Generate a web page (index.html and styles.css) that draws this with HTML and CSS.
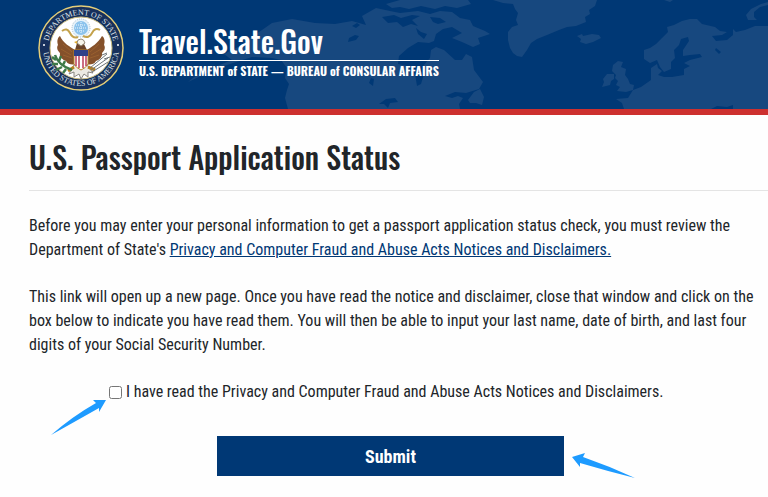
FILE: index.html
```
<!DOCTYPE html>
<html lang="en">
<head>
    <meta charset="UTF-8">
    <meta name="viewport" content="width=device-width, initial-scale=1.0">
    <title>U.S. Passport Application Status</title>
    <link rel="stylesheet" href="styles.css">
</head>
<body>
    <header class="site-header">
        <svg class="map" viewBox="0 0 768 109" preserveAspectRatio="xMidYMin slice" aria-hidden="true">
            <g class="land">
                <!-- north america -->
                <path d="M188 82L198 74 212 68 232 60 224 54 240 46 250 38 262 30 272 23 292 19 315 23 335 24 352 21 366 25 362 16 376 8 390 11 400 13 418 11 430 14 440 11 452 12 460 18 470 20 473 26 485 31 490 34 478 38 480 44 473 47 462 42 452 38 462 33 452 27 443 29 436 34 434 41 429 43 418 42 408 48 399 56 398 64 407 66 415 74 417 86 421 84 424 74 423 66 430 58 431 50 436 47 444 50 455 60 462 60 466 54 472 57 474 70 483 82 479 89 466 93 455 92 445 96 452 98 458 96 463 98 459 104 460 109 288 109 285 98 287 90 289 84 285 78 287 68 281 60 272 58 252 57 236 62 218 68 205 74z"/>
                <path d="M386 4L400 0 468 0 471 4 457 8 445 6 435 9 421 6 409 9 400 7 392 8z"/>
                <path d="M468 100L474 92 480 89 484 97 482 105 476 103 470 103z"/>
                <!-- greenland and iceland -->
                <path d="M493 0H597L595 6 589 10 590 14 585 17 586 22 576 26 567 27 559 30 547 35 537 39 531 43 527 50 522 57 517 56 513 53 510 48 508 40 508 32 512 27 518 25 516 20 518 13 515 9 513 4 503 3z"/>
                <path d="M577 36l5-2 1 2 9-2 7 1 2 3-8 4-7 2-6-2 1-3z"/>
                <!-- british isles -->
                <path d="M613 65l5-4 5 1-2 5 5 2-1 6 3 4 2 5 4 1-1 5-7 2-9-1 3-4-4-2 2-4-3-3 1-3-4-4z"/>
                <path d="M603 79l4-5 7 0 0 5-3 2-1 4-8 2 2-5z"/>
                <!-- europe -->
                <path d="M644 50L650 48 656 44 662 38 668 32 667 27 674 25 682 21 690 19 697 19 702 24 715 27 720 31 727 32 722 35 712 36 716 41 727 40 733 35 733 29 736 32 745 30 755 26 768 26V109H624L622 103 616 99 628 98 633 90 641 87 651 80 651 68 657 64 658 68 662 71 658 75 664 77 672 77 684 75 684 69 690 66 684 63 690 60 702 57 700 54 690 55 683 56 683 50 689 41 688 37 681 39 679 45 674 50 675 58 671 62 671 69 664 72 660 67 657 60 650 63 644 59z"/>
                <path d="M748 20l-2-5 5-6 10-5 7-2 0 3-8 2-6 5 0 5 3 3z"/>
                <path d="M664 0l6 2 3-2z"/>
            </g>
            <g class="water">
                <path d="M352 26l5-3 3 2-4 3zM349 38l6-3 4 1-3 4-8 2zM379 104l7-5 9-1 3 4-8 1-2 5-4-4zM371 78l3 1-1 7-4-3z"/>
                <path d="M382 17l12-2 7 3 11-3 8 1-8 4 6 6-7-2-8 3-6-5-9 1zM416 28l5 4 6 2-3 5-6-5zM430 17l10 1 6 4-8 2-5-2zM716 48l5 4-2 2-4-4zM711 109l6-3 10 1 6-2 0 4z"/>
            </g>
        </svg>

        <div class="brand">
            <svg class="seal" viewBox="0 0 86 86" role="img" aria-label="Department of State seal">
                <defs>
                    <path id="arcTop" d="M10 43a33 33 0 0 1 66 0"/>
                    <path id="arcBottom" d="M5 43a38 38 0 0 0 76 0"/>
                </defs>
                <circle cx="43" cy="43" r="42" fill="#17305c" stroke="#e4ce79" stroke-width="1.5"/>
                <circle cx="43" cy="43" r="31" fill="#fff" stroke="#c9ba7d"/>
                <text class="seal-text"><textPath href="#arcTop" startOffset="50%" text-anchor="middle">DEPARTMENT OF STATE</textPath></text>
                <text class="seal-text"><textPath href="#arcBottom" startOffset="50%" text-anchor="middle">UNITED STATES OF AMERICA</textPath></text>
                <!-- glory -->
                <circle cx="43" cy="23" r="9" fill="#e8f3fa" stroke="#a6bfd0" stroke-dasharray="1 1"/>
                <circle cx="43" cy="23" r="7" fill="#8cc3ec"/>
                <path d="M38 20h10M37 23h12M39 26h8M43 17v12" stroke="#eef8ff" stroke-dasharray="1 1"/>
                <!-- ribbon -->
                <path d="M24 26q5-4 8 2 3 6 8 4M62 25q-5-3-8 3-3 6-9 3" fill="none" stroke="#c4a24c" stroke-width="2"/>
                <!-- wings, body, tail -->
                <path d="M39 46C32 42 25 38 22 31c-3 2-3 6-2 9-2 3 0 6 2 8-1 4 3 7 6 8 2 4 7 4 11 3z" fill="#85512b"/>
                <path d="M47 46c7-4 13-8 17-15 3 2 3 6 2 9 2 3 0 6-2 8 1 4-3 7-6 8-2 4-7 4-11 3z" fill="#85512b"/>
                <path d="M25 39l9 8M23 44l10 6M25 50l9 3M61 39l-9 8M63 44l-10 6M61 50l-9 3" stroke="#99602f"/>
                <path d="M37 45l2-7 6-1 4 8z" fill="#694329"/>
                <path d="M39 38q0-4 4-4 3 0 4 4l-4 3z" fill="#f7f5eb" stroke="#938875"/>
                <path d="M39 36l-3 1 3 2" fill="#dba72c"/>
                <path d="M36 60l-5 9 5-2 0 5 5-3 2 5 3-5 4 3 0-5 5 1-6-8z" fill="#eceae4" stroke="#888580"/>
                <path d="M36 62l-6 4M50 62l7 3" stroke="#b9801f" stroke-width="3"/>
                <!-- shield -->
                <path d="M36 45h14v14q-2 4-7 6-5-2-7-6z" fill="#fff" stroke="#b8862f"/>
                <path d="M38 50v11M41 50v13M45 50v13M48 50v11" stroke="#ba3e5a" stroke-width="1.5"/>
                <path d="M36 45h14v6H36z" fill="#2d4189"/>
                <!-- olive branch and arrows -->
                <path d="M17 50q3 10 17 15M18 55l-4-3M20 59l-6 0M24 62l-6 3M28 64l-3 4M21 56l2-5M25 60l2-4" fill="none" stroke="#3e7a48" stroke-width="2.5"/>
                <path d="M52 63l17-14M53 65l17-12M54 67l16-10M64 50l5-2M66 54l6-2" stroke="#6d7479"/>
                <circle cx="6" cy="40" r="1" fill="#fff"/>
                <circle cx="80" cy="40" r="1" fill="#fff"/>
            </svg>
            <div class="brand-text">
                <div class="brand-name">Travel.State.Gov</div>
                <div class="brand-sub">U.S. DEPARTMENT of STATE — BUREAU of CONSULAR AFFAIRS</div>
            </div>
        </div>
    </header>

    <main>
        <h1>U.S. Passport Application Status</h1>

        <p>Before you may enter your personal information to get a passport application status check, you must review the
        Department of State's <a href="#">Privacy and Computer Fraud and Abuse Acts Notices and Disclaimers.</a></p>

        <p>This link will open up a new page. Once you have read the notice and disclaimer, close that window and click on the
        box below to indicate you have read them. You will then be able to input your last name, date of birth, and last four
        digits of your Social Security Number.</p>

        <form>
            <div class="agree">
                <input type="checkbox" id="agree">
                <label for="agree">I have read the Privacy and Computer Fraud and Abuse Acts Notices and Disclaimers.</label>
                <svg class="arrow arrow-left" viewBox="0 0 56 36" aria-hidden="true">
                    <path d="M55 1L42 1l3 3Q22 17 0 36 25 22 48 9l0 4z"/>
                </svg>
            </div>
            <div class="submit-row">
                <button type="submit">Submit</button>
                <svg class="arrow arrow-right" viewBox="0 0 63 25" aria-hidden="true">
                    <path d="M0 4L13 0l-2 4Q37 13 63 25 35 18 8 10l0 4z"/>
                </svg>
            </div>
        </form>
    </main>
</body>
</html>
```
FILE: styles.css
```
* {
    box-sizing: border-box;
}

body {
    margin: 0;
    background: #fefefe;
    color: #212529;
    font-family: "Roboto Condensed", "Liberation Sans Narrow", sans-serif;
    font-size: 16px;
    line-height: 24px;
}

.site-header {
    position: relative;
    background: #003875;
    border-bottom: 6px solid #cd302f;
    overflow: hidden;
}

.map {
    position: absolute;
    top: 0;
    left: 0;
    width: 100%;
    height: 100%;
}

.land {
    fill: #17487f;
}

.water {
    fill: #003875;
}

.brand {
    position: relative;
    display: flex;
    gap: 15px;
    padding: 5px 38px 18px;
}

.seal {
    width: 86px;
    height: 86px;
}

.seal-text {
    fill: #dfe4e8;
    font-family: "Liberation Serif", serif;
    font-size: 8px;
}

.brand-text {
    padding-top: 18px;
    color: #fff;
    font-family: "Oswald", "Liberation Sans Narrow", sans-serif;
    font-weight: 500;
    white-space: nowrap;
}

.brand-name {
    padding-bottom: 2px;
    border-bottom: 1px solid #fff;
    font-size: 30px;
    line-height: 35px;
}

.brand-sub {
    font-size: 12px;
    font-weight: bold;
    line-height: 20px;
}

main {
    padding: 22px 0 20px 29px;
}

h1 {
    margin: 0 0 23px;
    padding-bottom: 13px;
    border-bottom: 1px solid #e4e4e4;
    font-family: "Oswald", "Liberation Sans Narrow", sans-serif;
    font-size: 30px;
    font-weight: 500;
    line-height: 40px;
}

p {
    margin: 0 0 23px;
    padding-right: 12px;
}

a {
    color: #003875;
}

form {
    padding-right: 16px;
}

.agree {
    position: relative;
    display: flex;
    align-items: center;
    gap: 4px;
    width: fit-content;
    margin: 0 0 32px 80px;
}

.agree input {
    width: 13px;
    height: 13px;
    margin: 0;
}

.submit-row {
    position: relative;
    width: 48%;
    margin: 0 auto;
}

button {
    display: block;
    width: 100%;
    height: 40px;
    border: 0;
    background: #003875;
    color: #fff;
    font-family: "Roboto Condensed", "Liberation Sans Narrow", sans-serif;
    font-size: 18px;
    font-weight: bold;
    cursor: pointer;
}

.arrow {
    position: absolute;
    fill: #1e9bff;
}

.arrow-left {
    right: 100%;
    top: 19px;
    width: 56px;
    height: 36px;
    margin-right: 2px;
}

.arrow-right {
    left: 100%;
    top: 17px;
    width: 63px;
    height: 25px;
    margin-left: 8px;
}
```
